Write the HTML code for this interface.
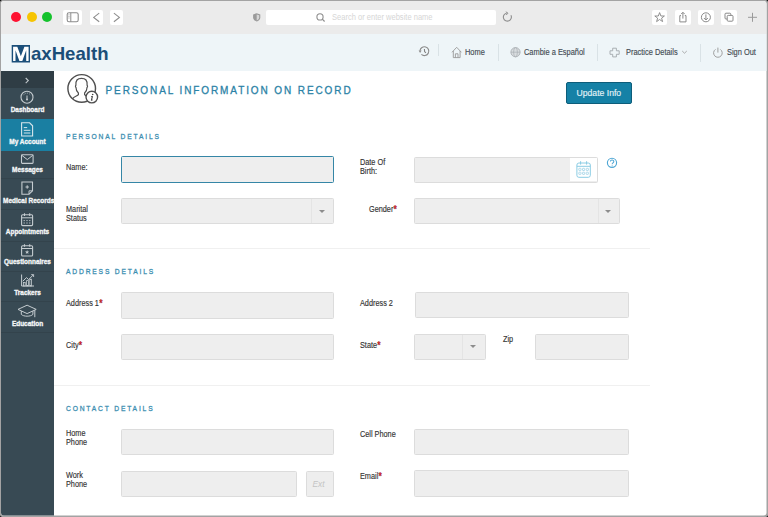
<!DOCTYPE html>
<html><head><meta charset="utf-8">
<style>
*{margin:0;padding:0;box-sizing:border-box}
html,body{width:768px;height:517px;overflow:hidden;background:#000;font-family:"Liberation Sans",sans-serif}
.win{position:absolute;left:0;top:0;width:768px;height:517px;border-radius:2.5px;background:#a3a3a3}
.inner{position:absolute;left:0;top:0;width:768px;height:517px;background:#fff;clip-path:inset(1px 1.5px 1.5px 1px round 3px)}
.a{position:absolute}
.tb{position:absolute;left:0;top:0;width:100%;height:34px;background:#ebebeb}
.dot{position:absolute;width:10px;height:10px;border-radius:50%;top:12.2px}
.btn{position:absolute;top:9.5px;height:15.5px;background:#fff;border-radius:2px}
.hdr{position:absolute;left:0;top:34px;width:100%;height:37px;background:#eef5f8}
.nav{position:absolute;font-size:8.8px;color:#434b53;line-height:10px;white-space:nowrap;-webkit-text-stroke:.15px #434b53;transform:scaleX(.845);transform-origin:0 0}
.sep{position:absolute;width:1px;background:#d9e2e6}
.side{position:absolute;left:0;top:71px;width:54px;bottom:0;background:#384a54}
.si{position:absolute;left:1px;width:53px;color:#f4f6f7;font-weight:bold;font-size:7px;text-align:center;line-height:8px;white-space:nowrap;-webkit-text-stroke:.35px #f4f6f7;transform:scaleX(.92);transform-origin:50% 0}
.ssep{position:absolute;left:0;width:53px;height:1px;background:#324048}
.lbl{position:absolute;font-size:8.6px;line-height:9px;color:#333;white-space:nowrap;transform:scaleX(.85);transform-origin:0 0;-webkit-text-stroke:.15px #333}
.req{color:#e3141c;font-weight:bold;font-size:10px;line-height:0;position:relative;top:1.7px;margin-left:.3px}
.inp{position:absolute;background:#eeeeee;border:1px solid #dcdcdc;border-radius:1.5px}
.sec{position:absolute;font-size:7.8px;line-height:9px;color:#3a8db0;letter-spacing:2.12px;white-space:nowrap;transform:scaleX(.86);transform-origin:0 0;-webkit-text-stroke:.3px #3a8db0}
.hr{position:absolute;left:54px;width:596px;height:1px;background:#f0f0f0}
.arr{position:absolute;width:0;height:0;border-left:3.4px solid transparent;border-right:3.4px solid transparent;border-top:3.8px solid #8c8c8c}
</style></head><body>
<div class="win"><div class="inner">

<!-- toolbar -->
<div class="tb"></div>
<div class="dot" style="left:10.8px;background:#fe1231"></div>
<div class="dot" style="left:26.5px;background:#f6c401"></div>
<div class="dot" style="left:42px;background:#14c22c"></div>
<div class="btn" style="left:63px;width:19.3px"></div>
<div class="btn" style="left:89.6px;width:13.4px"></div>
<div class="btn" style="left:110px;width:13.3px"></div>
<div class="btn" style="left:266px;width:230px"></div>
<div class="btn" style="left:651.7px;width:15.8px"></div>
<div class="btn" style="left:675px;width:15.8px"></div>
<div class="btn" style="left:698px;width:15.8px"></div>
<div class="btn" style="left:721.2px;width:15.8px"></div>

<!-- header -->
<div class="hdr"></div>
<svg class="a" style="left:0;top:0" width="768" height="71" viewBox="0 0 768 71">
 <!-- sidebar icon -->
 <rect x="67.2" y="12.8" width="11" height="9" rx="1.8" fill="none" stroke="#8c8c8c" stroke-width="1.1"/>
 <line x1="70.8" y1="12.8" x2="70.8" y2="21.8" stroke="#8c8c8c" stroke-width="1"/>
 <line x1="68.3" y1="14.8" x2="69.6" y2="14.8" stroke="#9a9a9a" stroke-width=".7"/>
 <line x1="68.3" y1="16.4" x2="69.6" y2="16.4" stroke="#9a9a9a" stroke-width=".7"/>
 <line x1="68.3" y1="18" x2="69.6" y2="18" stroke="#9a9a9a" stroke-width=".7"/>
 <!-- back/fwd -->
 <polyline points="99.2,13.1 93.7,17.4 99.2,21.8" fill="none" stroke="#8e8e8e" stroke-width="1.1"/>
 <polyline points="113.9,13.1 119.4,17.4 113.9,21.8" fill="none" stroke="#8e8e8e" stroke-width="1.1"/>
 <!-- shield -->
 <path d="M256.7,13.2 L260.3,14.4 L260.3,17.5 C260.3,19.6 258.6,20.9 256.7,21.6 C254.8,20.9 253.1,19.6 253.1,17.5 L253.1,14.4 Z" fill="#9a9a9a"/>
 <path d="M256.7,14.4 L259.2,15.2 L259.2,17.5 C259.2,19 258,19.9 256.7,20.4 Z" fill="#d6d6d6"/>
 <!-- search -->
 <circle cx="320" cy="16.9" r="3.1" fill="none" stroke="#8e8e8e" stroke-width="1.1"/>
 <line x1="322.3" y1="19.2" x2="324.6" y2="21.5" stroke="#8e8e8e" stroke-width="1.2"/>
 <!-- reload -->
 <path d="M510.9,15.2 A4,4 0 1 1 506.6,13.2" fill="none" stroke="#8e8e8e" stroke-width="1.1"/>
 <polyline points="505.8,11.8 508,13.2 506.2,15" fill="none" stroke="#8e8e8e" stroke-width="1"/>
 <!-- star -->
 <polygon points="659.6,12.6 660.9,16 664.4,16 661.6,18.1 662.6,21.6 659.6,19.5 656.6,21.6 657.6,18.1 654.8,16 658.3,16" fill="none" stroke="#8a8a8a" stroke-width=".95" stroke-linejoin="round"/>
 <!-- share -->
 <path d="M681,15.6 L679.8,15.6 L679.8,21.9 L686,21.9 L686,15.6 L684.8,15.6" fill="none" stroke="#8a8a8a" stroke-width="1"/>
 <line x1="682.9" y1="12.4" x2="682.9" y2="18.6" stroke="#8a8a8a" stroke-width="1"/>
 <polyline points="681.1,14.1 682.9,12.3 684.7,14.1" fill="none" stroke="#8a8a8a" stroke-width="1"/>
 <!-- download -->
 <circle cx="705.9" cy="17.3" r="4.5" fill="none" stroke="#8a8a8a" stroke-width="1"/>
 <line x1="705.9" y1="14.4" x2="705.9" y2="19.8" stroke="#8a8a8a" stroke-width="1"/>
 <polyline points="703.9,18 705.9,20 707.9,18" fill="none" stroke="#8a8a8a" stroke-width="1"/>
 <!-- tabs -->
 <rect x="725" y="13.2" width="5.8" height="5.8" rx="1" fill="none" stroke="#8a8a8a" stroke-width="1"/>
 <rect x="727.2" y="15.4" width="5.8" height="5.8" rx="1" fill="#fff" stroke="#8a8a8a" stroke-width="1"/>
 <!-- plus -->
 <line x1="748" y1="17.3" x2="757" y2="17.3" stroke="#9a9a9a" stroke-width="1"/>
 <line x1="752.5" y1="12.8" x2="752.5" y2="21.8" stroke="#9a9a9a" stroke-width="1"/>
 <!-- logo M -->
 <rect x="11.7" y="45" width="18.3" height="17.5" fill="#1b4f7a"/>
 <polygon points="13.1,46.7 17.3,46.7 20.85,56.3 24.4,46.7 28.6,46.7 28.6,60.9 26.2,60.9 26.2,50.3 22.3,60.9 19.4,60.9 15.5,50.3 15.5,60.9 13.1,60.9" fill="#fff"/>
 <!-- history -->
 <path d="M420,50.8 A4.4,4.4 0 1 1 421.4,54.4" fill="none" stroke="#8c8c8c" stroke-width="1.15"/>
 <polygon points="418.6,50.6 421.6,50.6 420.1,52.9" fill="#8c8c8c"/>
 <polyline points="424.4,49 424.6,51.6 425.9,52.9" fill="none" stroke="#808080" stroke-width="1.1"/>
 <!-- home -->
 <polyline points="452,52.3 456.7,47.3 461.4,52.3" fill="none" stroke="#999" stroke-width=".9"/>
 <polyline points="453.3,51 453.3,57.6 460.1,57.6 460.1,51" fill="none" stroke="#999" stroke-width=".9"/>
 <polyline points="455.4,57.6 455.4,53.8 458,53.8 458,57.6" fill="none" stroke="#999" stroke-width=".9"/>
 <!-- globe -->
 <circle cx="515.5" cy="52.2" r="4.6" fill="#d9dde0" stroke="#a9afb3" stroke-width=".9"/>
 <ellipse cx="515.5" cy="52.2" rx="1.9" ry="4.6" fill="none" stroke="#a9afb3" stroke-width=".7"/>
 <line x1="510.9" y1="52.2" x2="520.1" y2="52.2" stroke="#a9afb3" stroke-width=".7"/>
 <!-- plus outline -->
 <path d="M612.7,48.2 L616.4,48.2 L616.4,50.8 L619.2,50.8 L619.2,54.3 L616.4,54.3 L616.4,56.9 L612.7,56.9 L612.7,54.3 L610,54.3 L610,50.8 L612.7,50.8 Z" fill="none" stroke="#a2a8ac" stroke-width=".9"/>
 <!-- chevron -->
 <polyline points="682.2,51 684.5,53.2 686.8,51" fill="none" stroke="#999" stroke-width=".8"/>
 <!-- power -->
 <path d="M715.5,49.4 A4.3,4.3 0 1 0 720.3,49.4" fill="none" stroke="#9a9a9a" stroke-width=".95"/>
 <line x1="717.9" y1="47.6" x2="717.9" y2="52.6" stroke="#9a9a9a" stroke-width=".95"/>
</svg>
<div class="a" style="left:259px;top:13px;"></div>
<div class="a" style="left:331.5px;top:12.5px;font-size:8.4px;line-height:9px;color:#d6d6d6;white-space:nowrap;transform:scaleX(.9);transform-origin:0 0">Search or enter website name</div>
<div class="a" style="left:31px;top:44px;font-size:18.6px;line-height:20px;font-weight:bold;color:#1b4e78;white-space:nowrap">axHealth</div>
<div class="sep" style="left:438.3px;top:43.5px;height:12px"></div>
<div class="sep" style="left:497.5px;top:43.8px;height:17.5px"></div>
<div class="sep" style="left:597.3px;top:43.8px;height:17.5px"></div>
<div class="sep" style="left:700.3px;top:44px;height:17.5px"></div>
<div class="nav" style="left:464.7px;top:47.1px">Home</div>
<div class="nav" style="left:524.2px;top:47.1px">Cambie a Español</div>
<div class="nav" style="left:625.8px;top:47.1px">Practice Details</div>
<div class="nav" style="left:726.5px;top:47.1px">Sign Out</div>

<!-- sidebar -->
<div class="side"></div>
<div class="a" style="left:1px;top:71px;width:53px;height:16.6px;background:#2f3d45"></div>
<div class="a" style="left:1px;top:118.8px;width:53px;height:32px;background:#1a7fa2"></div>
<svg class="a" style="left:0;top:71px" width="54" height="270" viewBox="0 71 54 270">
 <g fill="none" stroke="#c5ccd0" stroke-width="1">
 <!-- chevron -->
 <polyline points="25.7,78 28.3,80.6 25.7,83.2" stroke="#c0c7cb" stroke-width="1.1"/>
 <!-- dashboard gauge -->
 <circle cx="27" cy="97.2" r="6" stroke-width="1.1"/>
 <path d="M23.4,95.2 A4.2,4.2 0 0 1 30.6,95.2" stroke-width=".8" stroke-dasharray=".9 1.1"/>
 <line x1="27" y1="95.5" x2="27" y2="99.5" stroke-width="1"/>
 <circle cx="27" cy="99.6" r="1" fill="#c5ccd0" stroke="none"/>
 <!-- doc -->
 <path d="M21.6,122.8 L29.6,122.8 L32.6,125.8 L32.6,136 L21.6,136 Z" stroke="#d7e6ec" stroke-width="1.1"/>
 <line x1="23.8" y1="127.6" x2="27.2" y2="127.6" stroke="#d7e6ec"/>
 <line x1="23.8" y1="130.3" x2="30.4" y2="130.3" stroke="#d7e6ec"/>
 <line x1="23.8" y1="133" x2="30.4" y2="133" stroke="#d7e6ec"/>
 <!-- envelope -->
 <rect x="21.5" y="154.8" width="11.6" height="8.6" rx=".8" stroke-width="1.1"/>
 <polyline points="21.8,155.3 27.3,159.6 32.8,155.3" stroke-width="1"/>
 <!-- medical records -->
 <path d="M21.9,182 L32.5,182 L32.5,190.8 L29,194.2 L21.9,194.2 Z" stroke-width="1.1"/>
 <path d="M32.5,190.8 L29,190.8 L29,194.2" stroke-width=".9"/>
 <line x1="27.2" y1="185.3" x2="27.2" y2="188.7" stroke-width="1"/>
 <line x1="25.5" y1="187" x2="28.9" y2="187" stroke-width="1"/>
 <!-- appointments -->
 <rect x="21.6" y="214.8" width="11" height="10.8" rx="1" stroke-width="1.1"/>
 <line x1="21.6" y1="217.8" x2="32.6" y2="217.8" stroke-width="1"/>
 <line x1="24.5" y1="213.2" x2="24.5" y2="216" stroke-width="1.1"/>
 <line x1="29.7" y1="213.2" x2="29.7" y2="216" stroke-width="1.1"/>
 <g stroke-width="1" stroke-dasharray="1.2 1.6">
  <line x1="23.6" y1="220.6" x2="31" y2="220.6"/>
  <line x1="23.6" y1="223" x2="31" y2="223"/>
 </g>
 <!-- questionnaires -->
 <rect x="21.6" y="245.8" width="11" height="10.2" rx="1" stroke-width="1.1"/>
 <line x1="21.6" y1="248.5" x2="32.6" y2="248.5" stroke-width="1"/>
 <line x1="24.5" y1="244.3" x2="24.5" y2="246.8" stroke-width="1.1"/>
 <line x1="29.7" y1="244.3" x2="29.7" y2="246.8" stroke-width="1.1"/>
 <polygon points="27.1,250 27.7,251.5 29.2,251.5 28,252.4 28.5,253.9 27.1,253 25.7,253.9 26.2,252.4 25,251.5 26.5,251.5" fill="#c5ccd0" stroke="none"/>
 <!-- trackers -->
 <polyline points="21.6,274.5 21.6,286 34,286" stroke-width="1"/>
 <polyline points="22.8,281.2 26.5,277.6 28.6,279.6 33.4,274.8" stroke-width="1"/>
 <polyline points="31.2,274.6 33.6,274.6 33.6,277" stroke-width=".9"/>
 <rect x="23.4" y="282.4" width="1.8" height="3.6" stroke-width=".8"/>
 <rect x="26.6" y="280.6" width="1.8" height="5.4" stroke-width=".8"/>
 <rect x="29.8" y="279.2" width="1.8" height="6.8" stroke-width=".8"/>
 <!-- education -->
 <polygon points="27.1,305.2 36.2,309.4 27.1,313.6 18,309.4" stroke-width="1" stroke-linejoin="round"/>
 <path d="M21.3,311 L21.3,314.4 C23.5,316.8 30.7,316.8 32.9,314.4 L32.9,311" stroke-width="1"/>
 <line x1="34.8" y1="310.1" x2="34.8" y2="317.2" stroke-width="1"/>
 </g>
 <line x1="0" y1="178.6" x2="54" y2="178.6" stroke="#33434c" stroke-width="1"/>
 <line x1="0" y1="209.5" x2="54" y2="209.5" stroke="#33434c" stroke-width="1"/>
 <line x1="0" y1="241.5" x2="54" y2="241.5" stroke="#33434c" stroke-width="1"/>
 <line x1="0" y1="271.5" x2="54" y2="271.5" stroke="#33434c" stroke-width="1"/>
 <line x1="0" y1="301.5" x2="54" y2="301.5" stroke="#33434c" stroke-width="1"/>
 <line x1="0" y1="332.5" x2="54" y2="332.5" stroke="#33434c" stroke-width="1"/>
</svg>
<div class="si" style="top:106.1px">Dashboard</div>
<div class="si" style="top:137.8px">My Account</div>
<div class="si" style="top:165.9px">Messages</div>
<div class="si" style="top:197.3px">Medical Records</div>
<div class="si" style="top:227.7px">Appointments</div>
<div class="si" style="top:257.9px">Questionnaires</div>
<div class="si" style="top:289.4px">Trackers</div>
<div class="si" style="top:320.4px">Education</div>
<!-- content -->
<svg class="a" style="left:60px;top:70px" width="45" height="40" viewBox="60 70 45 40">
 <circle cx="81.7" cy="88.4" r="13.8" fill="none" stroke="#505050" stroke-width="1.45"/>
 <path d="M72.5,98.8 C74,96.5 77.5,95.8 78.4,94.6 L78.4,93 C76.6,91.5 76,89.5 76,87.5 C75.3,87 75.3,85.5 75.9,85.3 C75.5,80.5 77.3,78.3 81.5,78.3 C85.7,78.3 87.5,80.5 87.1,85.3 C87.7,85.5 87.7,87 87,87.5 C87,89.5 86.4,91.5 84.6,93 L84.6,94.6 C85.2,95.4 86.5,96 87.5,96.5" fill="none" stroke="#505050" stroke-width="1.2"/>
 <circle cx="91.8" cy="97.1" r="5.8" fill="#fff" stroke="#505050" stroke-width="1.4"/>
 <circle cx="92.7" cy="94.5" r=".8" fill="#444"/><path d="M91.6,96.5 L92.4,96.5 L91.4,100.2 L92.2,100" fill="none" stroke="#444" stroke-width="1.1" stroke-linecap="round" stroke-linejoin="round"/>
</svg>
<div class="a" style="left:105.5px;top:85.2px;font-size:10px;line-height:11px;color:#2a82a6;letter-spacing:1.9px;white-space:nowrap;-webkit-text-stroke:.28px #2a82a6">PERSONAL INFORMATION ON RECORD</div>
<div class="a" style="left:566.3px;top:81.8px;width:65.7px;height:22.6px;background:#1581a6;border:1px solid #0d5d7a;border-radius:2px"></div>
<div class="a" style="left:566.3px;top:88.1px;width:65.7px;text-align:center;font-size:9.1px;line-height:11px;color:#e4f2f7;white-space:nowrap;-webkit-text-stroke:.15px #e4f2f7;transform:scaleX(.95);transform-origin:50% 0">Update Info</div>

<div class="sec" style="left:65.9px;top:131.9px">PERSONAL DETAILS</div>
<div class="sec" style="left:65.6px;top:267.1px">ADDRESS DETAILS</div>
<div class="sec" style="left:65.7px;top:404.1px">CONTACT DETAILS</div>
<div class="hr" style="top:248px"></div>
<div class="hr" style="top:385px"></div>
<div class="lbl" style="left:66px;top:162.73px">Name:</div>
<div class="inp" style="left:120.6px;top:156.4px;width:213.4px;height:26.6px;border:1.8px solid #3586a6;border-radius:1.5px"></div>
<div class="lbl" style="left:360.4px;top:157.5px">Date Of<br>Birth:</div>
<div class="inp" style="left:413.9px;top:156.5px;width:183.7px;height:26.1px;"></div>
<div class="a" style="left:570px;top:157.6px;width:26.6px;height:23.8px;background:#fff"></div>
<div class="lbl" style="left:66px;top:204.6px">Marital<br>Status</div>
<div class="inp" style="left:120.6px;top:198px;width:213.4px;height:26.4px;"></div>
<div class="a" style="left:311px;top:199px;width:1px;height:24.4px;background:#e4e4e4"></div>
<div class="arr" style="left:318.6px;top:209.5px"></div>
<div class="lbl" style="left:368.9px;top:204.73px">Gender<span class="req">*</span></div>
<div class="inp" style="left:413.9px;top:198.1px;width:206.1px;height:26.3px;"></div>
<div class="a" style="left:597.5px;top:199.4px;width:1px;height:24px;background:#e4e4e4"></div>
<div class="arr" style="left:605.4px;top:210px"></div>
<div class="lbl" style="left:66px;top:298.73px">Address 1<span class="req">*</span></div>
<div class="inp" style="left:120.9px;top:292.1px;width:213.1px;height:26.5px;"></div>
<div class="lbl" style="left:360px;top:298.53px">Address 2</div>
<div class="inp" style="left:415px;top:292px;width:213.8px;height:26.4px;"></div>
<div class="lbl" style="left:66px;top:340.73px">City<span class="req">*</span></div>
<div class="inp" style="left:120.9px;top:333.9px;width:213.1px;height:26px;"></div>
<div class="lbl" style="left:360px;top:340.73px">State<span class="req">*</span></div>
<div class="inp" style="left:414px;top:333.8px;width:72px;height:26.1px;"></div>
<div class="a" style="left:462.4px;top:334.9px;width:1px;height:23.8px;background:#e4e4e4"></div>
<div class="arr" style="left:470.1px;top:345.2px"></div>
<div class="lbl" style="left:502.7px;top:334.73px">Zip</div>
<div class="inp" style="left:534.6px;top:333.8px;width:94.2px;height:26.1px;"></div>
<div class="lbl" style="left:66px;top:429.4px">Home<br>Phone</div>
<div class="inp" style="left:121px;top:429px;width:212.7px;height:25.8px;"></div>
<div class="lbl" style="left:360px;top:430.13px">Cell Phone</div>
<div class="inp" style="left:414.1px;top:428.9px;width:214.9px;height:26px;"></div>
<div class="lbl" style="left:66px;top:471.2px">Work<br>Phone</div>
<div class="inp" style="left:121px;top:470.5px;width:175.5px;height:26.0px;"></div>
<div class="inp" style="left:305.8px;top:470.5px;width:27.9px;height:26.2px;"></div>
<div class="a" style="left:312.5px;top:478.5px;font-size:8.4px;line-height:10px;font-style:italic;color:#c4c4c4">Ext</div>
<div class="lbl" style="left:360px;top:471.73px">Email<span class="req">*</span></div>
<div class="inp" style="left:414.1px;top:470.3px;width:214.9px;height:26.3px;"></div>
<svg class="a" style="left:570px;top:150px" width="60" height="35" viewBox="570 150 60 35">
 <g fill="none" stroke="#8accE4" stroke-width="1">
 <rect x="576.9" y="163" width="13.4" height="14.3" rx="2"/>
 <line x1="576.9" y1="166.3" x2="590.3" y2="166.3"/>
 <line x1="580.6" y1="161.2" x2="580.6" y2="164.6"/>
 <line x1="586.6" y1="161.2" x2="586.6" y2="164.6"/>
 </g>
 <g fill="none" stroke="#9fd2e6" stroke-width=".8">
 <rect x="578.8" y="168.3" width="2.2" height="2.2" rx=".5"/><rect x="582.5" y="168.3" width="2.2" height="2.2" rx=".5"/><rect x="586.2" y="168.3" width="2.2" height="2.2" rx=".5"/>
 <rect x="578.8" y="172.2" width="2.2" height="2.2" rx=".5"/><rect x="582.5" y="172.2" width="2.2" height="2.2" rx=".5"/><rect x="586.2" y="172.2" width="2.2" height="2.2" rx=".5"/>
 </g>
 <circle cx="612" cy="162.8" r="4.6" fill="none" stroke="#4ea6d4" stroke-width="1.15"/>
 <path d="M610.4,161.6 C610.4,159.4 613.8,159.4 613.8,161.5 C613.8,162.8 612.1,163 612.1,164.3" fill="none" stroke="#4ea6d4" stroke-width="1.05"/>
 <circle cx="612.1" cy="165.8" r=".5" fill="#4ea6d4"/>
</svg>
</div></div>
</body></html>
